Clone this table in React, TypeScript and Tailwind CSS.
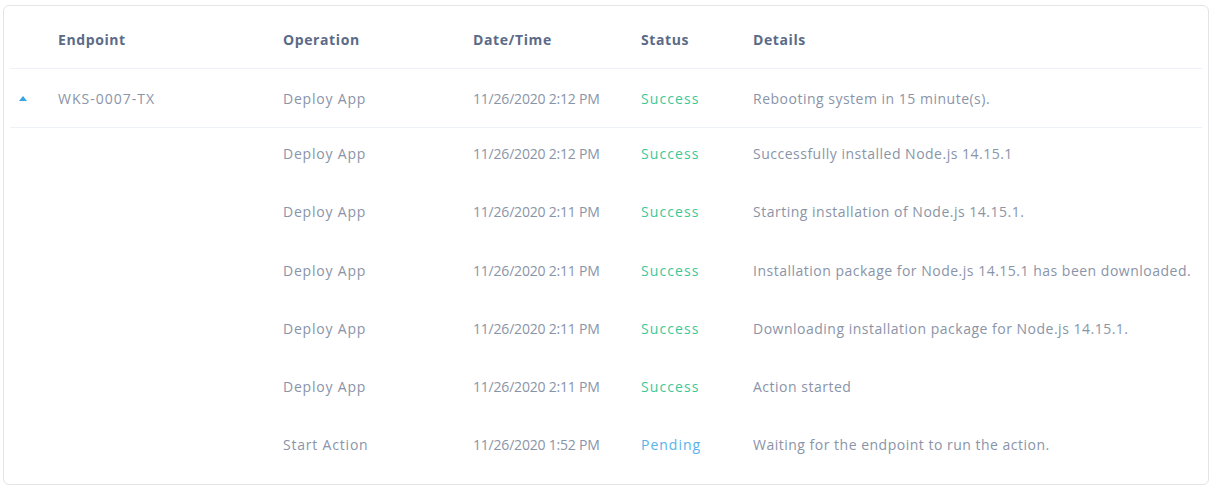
import React from "react";

type Row = { op: string; dt: string; status: "Success" | "Pending"; details: string };

const rows: Row[] = [
  { op: "Deploy App", dt: "11/26/2020 2:12 PM", status: "Success", details: "Successfully installed Node.js 14.15.1" },
  { op: "Deploy App", dt: "11/26/2020 2:11 PM", status: "Success", details: "Starting installation of Node.js 14.15.1." },
  { op: "Deploy App", dt: "11/26/2020 2:11 PM", status: "Success", details: "Installation package for Node.js 14.15.1 has been downloaded." },
  { op: "Deploy App", dt: "11/26/2020 2:11 PM", status: "Success", details: "Downloading installation package for Node.js 14.15.1." },
  { op: "Deploy App", dt: "11/26/2020 2:11 PM", status: "Success", details: "Action started" },
  { op: "Start Action", dt: "11/26/2020 1:52 PM", status: "Pending", details: "Waiting for the endpoint to run the action." },
];

const grid = "grid grid-cols-[48px_225px_190px_168px_112px_1fr]";

function StatusText({ s }: { s: Row["status"] }) {
  return s === "Success" ? (
    <span className="text-[#3cc89a] tracking-[1.1px]">Success</span>
  ) : (
    <span className="text-[#5ab2ea] tracking-[1px]">Pending</span>
  );
}

export default function App() {
  return (
    <div className="bg-white w-[1212px] h-[493px] pt-[5px] pl-[3px] font-['Open_Sans',sans-serif] text-[14px] tracking-[0.5px] text-[#8a94a8]">
      <div className="w-[1206px] h-[480px] border border-[#e2e4e8] rounded-[6px] px-[6px]">
        {/* header */}
        <div className={`${grid} h-[63px] items-center pt-[4px] border-b border-[#eef2f8] font-bold text-[#5b6b87] tracking-[0.6px]`}>
          <div />
          <div>Endpoint</div>
          <div>Operation</div>
          <div>Date/Time</div>
          <div>Status</div>
          <div>Details</div>
        </div>
        {/* parent row */}
        <div className={`${grid} h-[59px] items-center border-b border-[#eef2f8]`}>
          <div className="flex pl-[9px]">
            <svg width="8" height="5" viewBox="0 0 8 5">
              <path d="M0 5 L4 0 L8 5 Z" fill="#3aa3e3" />
            </svg>
          </div>
          <div className="tracking-[1px]">WKS-0007-TX</div>
          <div className="tracking-[0.8px]">Deploy App</div>
          <div className="tracking-[-0.2px]">11/26/2020 2:12 PM</div>
          <div>
            <StatusText s="Success" />
          </div>
          <div>Rebooting system in 15 minute(s).</div>
        </div>
        {/* child rows */}
        {rows.map((r, i) => (
          <div key={i} className={`${grid} h-[58.3px] items-start pt-[15px]`}>
            <div />
            <div />
            <div className="tracking-[0.8px]">{r.op}</div>
            <div className="tracking-[-0.2px]">{r.dt}</div>
            <div>
              <StatusText s={r.status} />
            </div>
            <div>{r.details}</div>
          </div>
        ))}
      </div>
    </div>
  );
}
